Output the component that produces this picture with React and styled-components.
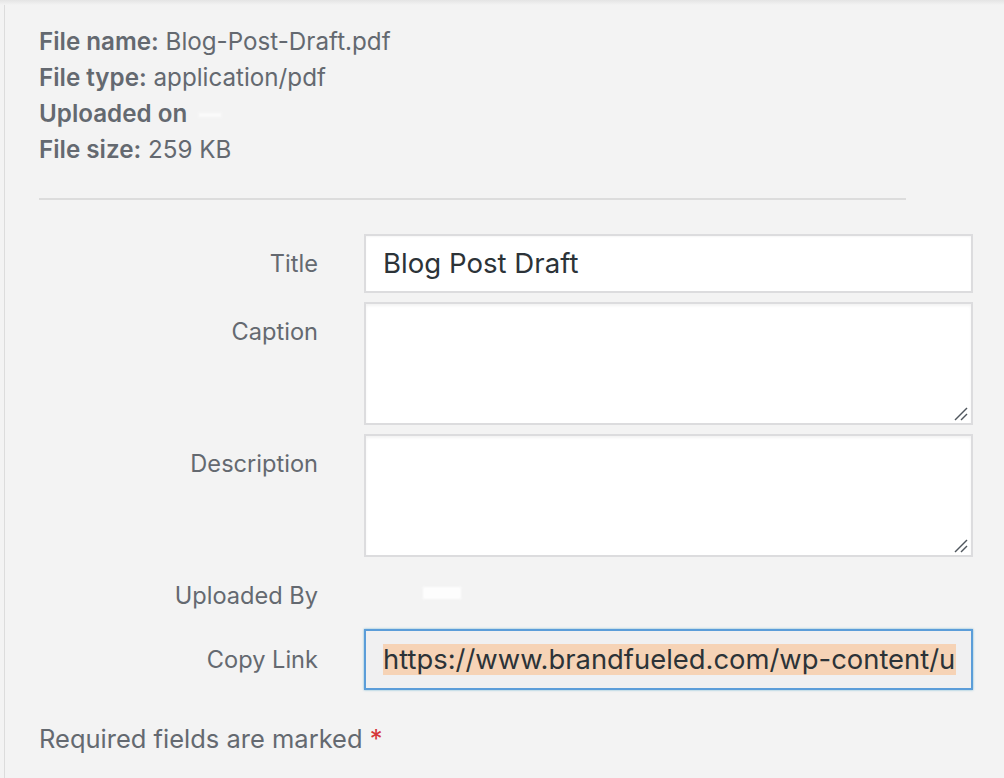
import React from "react";
import styled, { createGlobalStyle } from "styled-components";

const Global = createGlobalStyle`
  html, body { margin: 0; padding: 0; background: #f3f3f3; }
  body { font-family: Inter, "Noto Sans", sans-serif; }
  * { box-sizing: border-box; }
`;

const Page = styled.div`
  width: 1004px;
  height: 778px;
  background: #f3f3f3;
  position: relative;
  overflow: hidden;
  padding-left: 4px;
  &::before {
    content: "";
    position: absolute;
    left: 0; right: 0; top: 0;
    height: 5px;
    background: linear-gradient(#e4e4e4, #f3f3f3);
  }
`;

const Panel = styled.div`
  height: 100%;
  border-left: 1px solid #dcdcdc;
  padding: 24px 0 0 34px;
`;

const Details = styled.div`
  color: #646970;
  font-size: 24.2px;
  line-height: 36px;
`;

const DetailLine = styled.div`
  white-space: nowrap;
  strong { font-weight: 600; }
`;

const Redact = styled.span`
  display: inline-block;
  width: ${p => p.w}px;
  height: ${p => p.h}px;
  background: #ffffff;
  opacity: ${p => p.o || 0.9};
  filter: blur(1px);
  vertical-align: middle;
  margin-left: ${p => p.ml || 0}px;
`;

const Separator = styled.hr`
  width: 867px;
  margin: 30px 0 34px;
  border: 0;
  border-top: 2px solid #dcdcdc;
`;

const Form = styled.div`
  display: grid;
  grid-template-columns: 279px 609px;
  column-gap: 46px;
  row-gap: 9px;
`;

const Label = styled.label`
  text-align: right;
  color: #646970;
  font-size: 23.6px;
  line-height: 30px;
  padding-top: ${p => p.pt ?? 15}px;
  white-space: nowrap;
`;

const TextInput = styled.div`
  height: 59px;
  background: #ffffff;
  border: 2px solid #dcdcde;
  box-shadow: inset 0 1px 2px rgba(0,0,0,0.04);
  color: #2c3338;
  font-size: 27.6px;
  line-height: 55px;
  padding: 0 17px;
  white-space: nowrap;
  overflow: hidden;
`;

const TextArea = styled.div`
  height: 123px;
  background: #ffffff;
  border: 2px solid #dcdcde;
  box-shadow: inset 0 2px 3px rgba(0,0,0,0.05);
  position: relative;
`;

const Grip = styled.svg`
  position: absolute;
  right: 2px;
  bottom: 2px;
`;

const UploadedBy = styled.div`
  height: 54px;
  display: flex;
  align-items: center;
  padding-left: 59px;
`;

const CopyInput = styled.div`
  height: 61px;
  background: #f0f0f1;
  border: 2px solid #5b9dd9;
  box-shadow: 0 0 2px rgba(30,140,190,0.6);
  padding: 0 15px 0 17px;
  display: flex;
  align-items: center;
  overflow: hidden;
`;

const Selected = styled.span`
  background: #f6d3b6;
  color: #2c3338;
  font-size: 27.4px;
  line-height: 31px;
  white-space: nowrap;
  overflow: hidden;
  display: block;
  width: 100%;
`;

const Required = styled.div`
  margin-top: 31px;
  color: #646970;
  font-size: 25.5px;
  line-height: 36px;
`;

const Star = styled.span`
  color: #d63638;
`;

function ResizeGrip() {
  return (
    <Grip width="16" height="16" viewBox="0 0 16 16">
      <line x1="2" y1="15" x2="14" y2="3" stroke="#50575e" strokeWidth="1.4" />
      <line x1="8" y1="15" x2="14" y2="9" stroke="#50575e" strokeWidth="1.4" />
    </Grip>
  );
}

export default function App() {
  return (
    <>
      <Global />
      <Page>
        <Panel>
          <Details>
            <DetailLine><strong>File name:</strong> Blog-Post-Draft.pdf</DetailLine>
            <DetailLine><strong>File type:</strong> application/pdf</DetailLine>
            <DetailLine><strong>Uploaded on</strong><Redact w={22} h={4} o={0.7} ml={12} /></DetailLine>
            <DetailLine><strong>File size:</strong> 259 KB</DetailLine>
          </Details>
          <Separator />
          <Form>
            <Label>Title</Label>
            <TextInput>Blog Post Draft</TextInput>
            <Label>Caption</Label>
            <TextArea><ResizeGrip /></TextArea>
            <Label>Description</Label>
            <TextArea><ResizeGrip /></TextArea>
            <Label pt={15}>Uploaded By</Label>
            <UploadedBy><Redact w={38} h={12} /></UploadedBy>
            <Label pt={16}>Copy Link</Label>
            <CopyInput>
              <Selected>https://www.brandfueled.com/wp-content/uploads/Blog-Post-Draft.pdf</Selected>
            </CopyInput>
          </Form>
          <Required>Required fields are marked <Star>*</Star></Required>
        </Panel>
      </Page>
    </>
  );
}
